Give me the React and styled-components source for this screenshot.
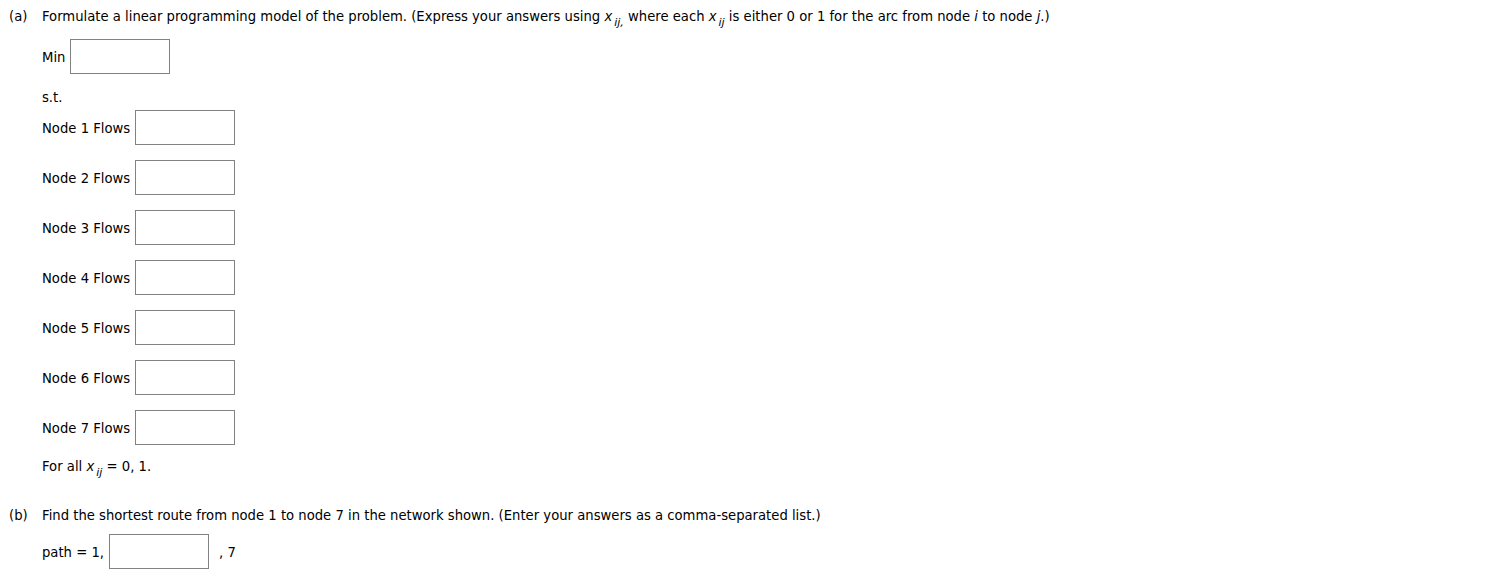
import styled, { createGlobalStyle } from "styled-components";

const GlobalStyle = createGlobalStyle`
  body {
    margin: 0;
    background: #fff;
    color: #000;
    font-family: "DejaVu Sans", Verdana, sans-serif;
    font-size: 13.2px;
  }
`;

const Page = styled.div`
  padding: 9px 0 0 9px;
`;

const Part = styled.div`
  display: flex;
  margin-top: ${(p) => p.$top || 0}px;
`;

const PartLabel = styled.span`
  width: 33px;
  flex-shrink: 0;
  line-height: 16px;
`;

const PartBody = styled.div`
  display: flex;
  flex-direction: column;
`;

const Line = styled.div`
  line-height: 16px;
  white-space: nowrap;
  margin-top: ${(p) => p.$top || 0}px;
`;

const Row = styled.div`
  display: flex;
  align-items: center;
  height: 35px;
  margin-top: ${(p) => p.$top || 0}px;
`;

const RowLabel = styled.span`
  padding-top: 2px;
  margin-right: 5px;
`;

const Box = styled.input`
  box-sizing: border-box;
  width: 100px;
  height: 35px;
  border: 1px solid #828282;
  background: #fff;
  margin: 0;
  padding: 0 4px;
  font: inherit;
  outline: none;
`;

const Var = styled.i`
  font-style: italic;
`;

const Sub = styled.sub`
  font-size: 11px;
  font-style: italic;
  vertical-align: -5px;
  line-height: 0;
  margin-left: 2px;
`;

const Tail = styled.span`
  padding-top: 2px;
  margin-left: 10px;
`;

function X({ children }) {
  return (
    <>
      <Var>x</Var>
      <Sub>{children || "ij"}</Sub>
    </>
  );
}

const nodes = [1, 2, 3, 4, 5, 6, 7];

export default function App() {
  return (
    <Page>
      <GlobalStyle />
      <Part>
        <PartLabel>(a)</PartLabel>
        <PartBody>
          <Line>
            Formulate a linear programming model of the problem. (Express your
            answers using <X>ij,</X> where each <X /> is either 0 or 1 for the arc
            from node <Var>i</Var> to node <Var>j</Var>.)
          </Line>

          <Row $top={14}>
            <RowLabel>Min</RowLabel>
            <Box />
          </Row>

          <Line $top={16}>s.t.</Line>

          {nodes.map((n, i) => (
            <Row key={n} $top={i === 0 ? 4 : 15}>
              <RowLabel>Node {n} Flows</RowLabel>
              <Box />
            </Row>
          ))}

          <Line $top={14}>
            For all <X /> = 0, 1.
          </Line>
        </PartBody>
      </Part>

      <Part $top={33}>
        <PartLabel>(b)</PartLabel>
        <PartBody>
          <Line>
            Find the shortest route from node 1 to node 7 in the network shown.
            (Enter your answers as a comma-separated list.)
          </Line>
          <Row $top={10}>
            <RowLabel>path = 1,</RowLabel>
            <Box />
            <Tail>, 7</Tail>
          </Row>
        </PartBody>
      </Part>
    </Page>
  );
}
